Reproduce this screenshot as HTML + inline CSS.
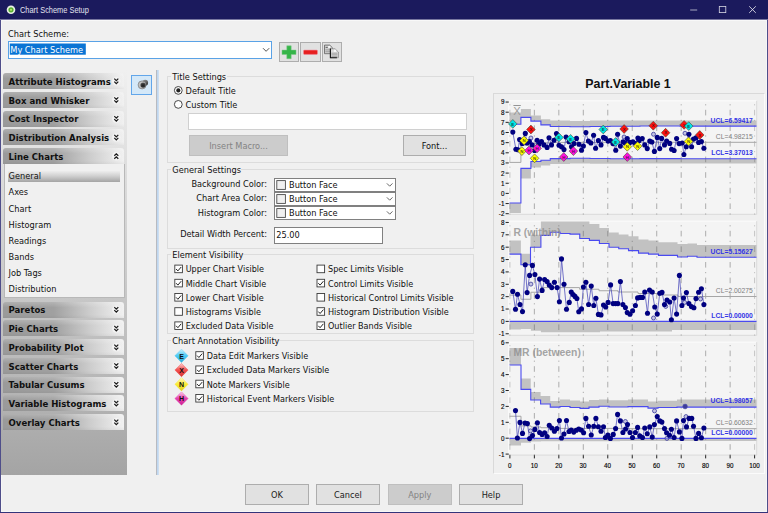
<!DOCTYPE html>
<html lang="en"><head><meta charset="utf-8"><title>Chart Scheme Setup</title>
<style>
html,body{margin:0;padding:0}
body{width:768px;height:513px;overflow:hidden;position:relative;background:#f0f0f0;font-family:"DejaVu Sans Condensed","Liberation Sans",sans-serif;}
.lib{font-family:"Liberation Sans",Arial,sans-serif;}
.t{position:absolute;white-space:nowrap;line-height:1;}
.b{position:absolute;box-sizing:border-box;}
svg{position:absolute;left:0;top:0;overflow:visible}
.hd{position:absolute;left:3px;width:121px;height:16px;border-radius:3px 3px 0 0;background:linear-gradient(180deg,rgba(255,255,255,.22) 0%,rgba(255,255,255,0) 35%,rgba(0,0,0,0) 80%,rgba(0,0,0,.04) 100%),linear-gradient(90deg,#9a9a9a 0%,#a0a0a0 42%,#cdcdcd 72%,#f1f1f1 100%);}
.btn{position:absolute;box-sizing:border-box;border:1px solid #adadad;background:#e1e1e1;}
.grp{position:absolute;box-sizing:border-box;border:1px solid #dcdcdc;}
.cb{position:absolute;box-sizing:border-box;width:9px;height:9px;border:1px solid #444;background:#fff;}
</style></head><body>

<div class="b" style="left:0px;top:0px;width:768px;height:20px;background:#1b1a5d;"></div>
<div class="b" style="left:0px;top:19px;width:768px;height:1px;background:#7877a0;"></div>
<div class="b" style="left:1px;top:20px;width:766px;height:1px;background:#f8f8f8;"></div>
<div class="b" style="left:0px;top:20px;width:1px;height:493px;background:#4f4e8a;"></div>
<div class="b" style="left:1px;top:20px;width:1px;height:491px;background:#f6f6f6;"></div>
<div class="b" style="left:767px;top:20px;width:1px;height:493px;background:#4f4e8a;"></div>
<div class="b" style="left:766px;top:20px;width:1px;height:491px;background:#f6f6f6;"></div>
<div class="b" style="left:1px;top:511px;width:766px;height:1px;background:#f7f7f7;"></div>
<div class="b" style="left:0px;top:512px;width:768px;height:1px;background:#34337a;"></div>
<div class="t lib" style="left:20.20px;top:6.00px;font-size:8.4px;color:#e4e4ee;transform:scaleX(0.885);transform-origin:0 0;">Chart Scheme Setup</div>
<div class="t " style="left:8.00px;top:30.00px;font-size:9.15px;color:#101010;">Chart Scheme:</div>
<div class="b" style="left:8px;top:41px;width:264px;height:18px;background:#fff;border:1px solid #5aa2e6;"></div>
<svg width="768" height="513"><rect x="9.8" y="43.5" width="76" height="11.2" fill="#0a74d4"/></svg>
<div class="t " style="left:10.30px;top:46.00px;font-size:9.15px;color:#ffffff;">My Chart Scheme</div>
<div class="btn" style="left:279px;top:42px;width:20px;height:20px"></div>
<div class="btn" style="left:300px;top:42px;width:21px;height:20px"></div>
<div class="btn" style="left:322px;top:42px;width:20px;height:20px"></div>
<div class="b" style="left:1px;top:70px;width:126px;height:405.4px;background:linear-gradient(180deg,#f0f0f0 0%,#e4e4e4 15%,#c8c8c8 55%,#a4a4a4 100%);"></div>
<div class="b" style="left:4px;top:164px;width:121px;height:134px;background:#f0f0f0;border:1px solid #b8b8b8;border-top:none;"></div>
<div class="b" style="left:8px;top:170.5px;width:112px;height:11px;background:linear-gradient(180deg,#ededed 0%,#d0d0d0 45%,#a4a4a4 100%);"></div>
<div class="t " style="left:8.60px;top:172.00px;font-size:9.15px;color:#101010;">General</div>
<div class="t " style="left:8.60px;top:188.00px;font-size:9.15px;color:#101010;">Axes</div>
<div class="t " style="left:8.60px;top:205.00px;font-size:9.15px;color:#101010;">Chart</div>
<div class="t " style="left:8.60px;top:221.00px;font-size:9.15px;color:#101010;">Histogram</div>
<div class="t " style="left:8.60px;top:237.00px;font-size:9.15px;color:#101010;">Readings</div>
<div class="t " style="left:8.60px;top:253.00px;font-size:9.15px;color:#101010;">Bands</div>
<div class="t " style="left:8.60px;top:269.00px;font-size:9.15px;color:#101010;">Job Tags</div>
<div class="t " style="left:8.60px;top:285.00px;font-size:9.15px;color:#101010;">Distribution</div>
<div class="hd" style="top:73px"></div>
<div class="t " style="left:8.60px;top:77.00px;font-size:9.5px;color:#101010;font-weight:bold;">Attribute Histograms</div>
<div class="hd" style="top:91.75px"></div>
<div class="t " style="left:8.60px;top:96.00px;font-size:9.5px;color:#101010;font-weight:bold;">Box and Whisker</div>
<div class="hd" style="top:110.5px"></div>
<div class="t " style="left:8.60px;top:114.00px;font-size:9.5px;color:#101010;font-weight:bold;">Cost Inspector</div>
<div class="hd" style="top:129.25px"></div>
<div class="t " style="left:8.60px;top:133.00px;font-size:9.5px;color:#101010;font-weight:bold;">Distribution Analysis</div>
<div class="hd" style="top:148px"></div>
<div class="t " style="left:8.60px;top:152.00px;font-size:9.5px;color:#101010;font-weight:bold;">Line Charts</div>
<div class="hd" style="top:301.5px"></div>
<div class="t " style="left:8.60px;top:305.00px;font-size:9.5px;color:#101010;font-weight:bold;">Paretos</div>
<div class="hd" style="top:320.25px"></div>
<div class="t " style="left:8.60px;top:324.00px;font-size:9.5px;color:#101010;font-weight:bold;">Pie Charts</div>
<div class="hd" style="top:339px"></div>
<div class="t " style="left:8.60px;top:343.00px;font-size:9.5px;color:#101010;font-weight:bold;">Probability Plot</div>
<div class="hd" style="top:357.75px"></div>
<div class="t " style="left:8.60px;top:362.00px;font-size:9.5px;color:#101010;font-weight:bold;">Scatter Charts</div>
<div class="hd" style="top:376.5px"></div>
<div class="t " style="left:8.60px;top:380.00px;font-size:9.5px;color:#101010;font-weight:bold;">Tabular Cusums</div>
<div class="hd" style="top:395.25px"></div>
<div class="t " style="left:8.60px;top:399.00px;font-size:9.5px;color:#101010;font-weight:bold;">Variable Histograms</div>
<div class="hd" style="top:414px"></div>
<div class="t " style="left:8.60px;top:418.00px;font-size:9.5px;color:#101010;font-weight:bold;">Overlay Charts</div>
<div class="b" style="left:131px;top:75px;width:21px;height:20px;background:#d4e8f8;border:1px solid #62a6ea;"></div>
<div class="b" style="left:156px;top:70px;width:1px;height:405px;background:#b8bac0;"></div>
<div class="b" style="left:157px;top:70px;width:2px;height:405px;background:linear-gradient(90deg,#bcd4ee 0%,#c4dbf2 60%,#d8e2ee 100%);"></div>
<div class="grp" style="left:167px;top:76px;width:307px;height:87px"></div>
<div class="b" style="left:171px;top:74px;width:56px;height:5px;background:#f0f0f0;"></div>
<div class="t " style="left:172.30px;top:73.00px;font-size:9.15px;color:#101010;">Title Settings</div>
<div class="grp" style="left:167px;top:169px;width:307px;height:80px"></div>
<div class="b" style="left:171px;top:167px;width:70px;height:5px;background:#f0f0f0;"></div>
<div class="t " style="left:172.30px;top:166.00px;font-size:9.15px;color:#101010;">General Settings</div>
<div class="grp" style="left:167px;top:254px;width:307px;height:80px"></div>
<div class="b" style="left:171px;top:252px;width:71px;height:5px;background:#f0f0f0;"></div>
<div class="t " style="left:172.30px;top:251.00px;font-size:9.15px;color:#101010;">Element Visibility</div>
<div class="grp" style="left:167px;top:340px;width:307px;height:72px"></div>
<div class="b" style="left:171px;top:338px;width:106px;height:5px;background:#f0f0f0;"></div>
<div class="t " style="left:172.30px;top:337.00px;font-size:9.15px;color:#101010;">Chart Annotation Visibility</div>
<div class="t " style="left:185.60px;top:87.00px;font-size:9.15px;color:#101010;">Default Title</div>
<div class="t " style="left:185.60px;top:101.00px;font-size:9.15px;color:#101010;">Custom Title</div>
<div class="b" style="left:188px;top:113px;width:279px;height:17px;background:#fff;border:1px solid #d0d0d0;"></div>
<div class="btn" style="left:189px;top:135px;width:99px;height:21px;background:#cccccc;border-color:#bfbfbf"></div>
<div class="t " style="left:138.50px;width:200px;text-align:center;top:142.00px;font-size:9.15px;color:#838383;">Insert Macro...</div>
<div class="btn" style="left:403px;top:135px;width:63px;height:21px"></div>
<div class="t " style="left:334.50px;width:200px;text-align:center;top:142.00px;font-size:9.15px;color:#101010;">Font...</div>
<div class="t " style="right:501.00px;top:180.00px;font-size:9.15px;color:#101010;">Background Color:</div>
<div class="b" style="left:274px;top:178px;width:122px;height:14px;background:#fff;border:1px solid #808080;"></div>
<div class="t " style="left:289.00px;top:181.00px;font-size:9.15px;color:#101010;">Button Face</div>
<div class="t " style="right:501.00px;top:194.00px;font-size:9.15px;color:#101010;">Chart Area Color:</div>
<div class="b" style="left:274px;top:192px;width:122px;height:14px;background:#fff;border:1px solid #808080;"></div>
<div class="t " style="left:289.00px;top:195.00px;font-size:9.15px;color:#101010;">Button Face</div>
<div class="t " style="right:501.00px;top:209.00px;font-size:9.15px;color:#101010;">Histogram Color:</div>
<div class="b" style="left:274px;top:206px;width:122px;height:14px;background:#fff;border:1px solid #808080;"></div>
<div class="t " style="left:289.00px;top:209.00px;font-size:9.15px;color:#101010;">Button Face</div>
<div class="t " style="right:501.00px;top:230.00px;font-size:9.15px;color:#101010;">Detail Width Percent:</div>
<div class="b" style="left:274px;top:227px;width:109px;height:17px;background:#fff;border:1px solid #808080;"></div>
<div class="t " style="left:276.30px;top:231.00px;font-size:9.15px;color:#101010;">25.00</div>
<div class="t " style="left:185.70px;top:265.00px;font-size:9.0px;color:#101010;">Upper Chart Visible</div>
<div class="t " style="left:185.70px;top:280.00px;font-size:9.0px;color:#101010;">Middle Chart Visible</div>
<div class="t " style="left:185.70px;top:294.00px;font-size:9.0px;color:#101010;">Lower Chart Visible</div>
<div class="t " style="left:185.70px;top:308.00px;font-size:9.0px;color:#101010;">Histograms Visible</div>
<div class="t " style="left:185.70px;top:322.00px;font-size:9.0px;color:#101010;">Excluded Data Visible</div>
<div class="t " style="left:328.00px;top:265.00px;font-size:9.0px;color:#101010;">Spec Limits Visible</div>
<div class="t " style="left:328.00px;top:280.00px;font-size:9.0px;color:#101010;">Control Limits Visible</div>
<div class="t " style="left:328.00px;top:294.00px;font-size:9.0px;color:#101010;">Historical Control Limits Visible</div>
<div class="t " style="left:328.00px;top:308.00px;font-size:9.0px;color:#101010;">Histogram Distribution Visible</div>
<div class="t " style="left:328.00px;top:322.00px;font-size:9.0px;color:#101010;">Outlier Bands Visible</div>
<div class="t " style="left:206.80px;top:352.00px;font-size:9.0px;color:#101010;">Data Edit Markers Visible</div>
<div class="t " style="left:206.80px;top:366.00px;font-size:9.0px;color:#101010;">Excluded Data Markers Visible</div>
<div class="t " style="left:206.80px;top:381.00px;font-size:9.0px;color:#101010;">Note Markers Visible</div>
<div class="t " style="left:206.80px;top:395.00px;font-size:9.0px;color:#101010;">Historical Event Markers Visible</div>
<div class="btn" style="left:245px;top:484px;width:64px;height:20.5px;"></div>
<div class="t " style="left:177.00px;width:200px;text-align:center;top:491.00px;font-size:9.15px;color:#1a1a1a;">OK</div>
<div class="btn" style="left:316px;top:484px;width:64px;height:20.5px;"></div>
<div class="t " style="left:248.00px;width:200px;text-align:center;top:491.00px;font-size:9.15px;color:#1a1a1a;">Cancel</div>
<div class="btn" style="left:388px;top:484px;width:63.5px;height:20.5px;background:#cccccc;border-color:#bfbfbf;"></div>
<div class="t " style="left:319.75px;width:200px;text-align:center;top:491.00px;font-size:9.15px;color:#838383;">Apply</div>
<div class="btn" style="left:459px;top:484px;width:64px;height:20.5px;"></div>
<div class="t " style="left:391.00px;width:200px;text-align:center;top:491.00px;font-size:9.15px;color:#1a1a1a;">Help</div>
<div class="t lib" style="left:528.00px;width:200px;text-align:center;top:78.00px;font-size:12.4px;color:#111;font-weight:bold;">Part.Variable 1</div>
<div class="b" style="left:493px;top:93px;width:272px;height:381px;border:1px solid #d9d9d9;border-right-color:#fbfbfb;border-bottom-color:#fbfbfb;background:#efefef;"></div>
<svg width="768" height="513" viewBox="0 0 768 513" font-family="Liberation Sans, Arial, sans-serif">
<rect x="508.8" y="100.8" width="247.9" height="113.2" fill="#f4f4f4"/>
<path d="M508.8 214.0 V100.8 H756.7" fill="none" stroke="#fdfdfd" stroke-width="1"/>
<path d="M508.8 214.3 H756.7 V100.8" fill="none" stroke="#dadada" stroke-width="1"/>
<path d="M509.50 124.30 L520.90 124.30 L520.90 117.40 L530.90 117.40 L530.90 121.10 L540.90 121.10 L540.90 124.90 L550.25 124.90 L550.25 126.50 L570.00 126.50 L570.00 126.80 L590.00 126.80 L590.00 126.50 L610.00 126.50 L610.00 126.20 L640.00 126.20 L640.00 126.00 L680.00 126.00 L680.00 126.10 L756.50 126.10 L756.50 120.50 L680.00 120.50 L680.00 120.50 L640.00 120.50 L640.00 120.40 L610.00 120.40 L610.00 120.60 L590.00 120.60 L590.00 120.90 L570.00 120.90 L570.00 120.50 L550.25 120.50 L550.25 119.25 L540.90 119.25 L540.90 115.50 L530.90 115.50 L530.90 109.00 L520.90 109.00 L520.90 112.40 L509.50 112.40 Z" fill="#c2c2c2"/>
<path d="M509.50 203.00 L520.90 203.00 L520.90 168.40 L530.90 168.40 L530.90 161.50 L540.90 161.50 L540.90 160.25 L550.25 160.25 L550.25 158.60 L570.00 158.60 L570.00 158.20 L590.00 158.20 L590.00 158.50 L610.00 158.50 L610.00 158.80 L640.00 158.80 L640.00 158.60 L680.00 158.60 L680.00 158.70 L756.50 158.70 L756.50 163.60 L680.00 163.60 L680.00 163.60 L640.00 163.60 L640.00 163.80 L610.00 163.80 L610.00 163.70 L590.00 163.70 L590.00 163.50 L570.00 163.50 L570.00 164.00 L550.25 164.00 L550.25 165.50 L540.90 165.50 L540.90 167.50 L530.90 167.50 L530.90 178.50 L520.90 178.50 L520.90 213.00 L509.50 213.00 Z" fill="#c2c2c2"/>
<line x1="509.90" y1="214.6" x2="509.90" y2="103.3" stroke="#666" stroke-opacity="0.4" stroke-width="0.85" stroke-dasharray="1.2 4.4 5.6 4.4"/>
<line x1="534.37" y1="214.6" x2="534.37" y2="103.3" stroke="#666" stroke-opacity="0.6" stroke-width="0.85" stroke-dasharray="1.2 4.4 5.6 4.4"/>
<line x1="558.84" y1="214.6" x2="558.84" y2="103.3" stroke="#666" stroke-opacity="0.6" stroke-width="0.85" stroke-dasharray="1.2 4.4 5.6 4.4"/>
<line x1="583.31" y1="214.6" x2="583.31" y2="103.3" stroke="#666" stroke-opacity="0.6" stroke-width="0.85" stroke-dasharray="1.2 4.4 5.6 4.4"/>
<line x1="607.78" y1="214.6" x2="607.78" y2="103.3" stroke="#666" stroke-opacity="0.6" stroke-width="0.85" stroke-dasharray="1.2 4.4 5.6 4.4"/>
<line x1="632.25" y1="214.6" x2="632.25" y2="103.3" stroke="#666" stroke-opacity="0.6" stroke-width="0.85" stroke-dasharray="1.2 4.4 5.6 4.4"/>
<line x1="656.72" y1="214.6" x2="656.72" y2="103.3" stroke="#666" stroke-opacity="0.6" stroke-width="0.85" stroke-dasharray="1.2 4.4 5.6 4.4"/>
<line x1="681.19" y1="214.6" x2="681.19" y2="103.3" stroke="#666" stroke-opacity="0.6" stroke-width="0.85" stroke-dasharray="1.2 4.4 5.6 4.4"/>
<line x1="705.66" y1="214.6" x2="705.66" y2="103.3" stroke="#666" stroke-opacity="0.6" stroke-width="0.85" stroke-dasharray="1.2 4.4 5.6 4.4"/>
<line x1="730.13" y1="214.6" x2="730.13" y2="103.3" stroke="#666" stroke-opacity="0.6" stroke-width="0.85" stroke-dasharray="1.2 4.4 5.6 4.4"/>
<line x1="754.60" y1="214.6" x2="754.60" y2="103.3" stroke="#666" stroke-opacity="0.4" stroke-width="0.85" stroke-dasharray="1.2 4.4 5.6 4.4"/>
<line x1="505.6" y1="213.70" x2="508.8" y2="213.70" stroke="#222" stroke-width="1"/>
<text transform="translate(504.4,216.10) scale(0.9,1)" font-size="7.0" text-anchor="end" fill="#000" stroke="#000" stroke-width="0.15">-2</text>
<line x1="505.6" y1="203.55" x2="508.8" y2="203.55" stroke="#222" stroke-width="1"/>
<text transform="translate(504.4,205.95) scale(0.9,1)" font-size="7.0" text-anchor="end" fill="#000" stroke="#000" stroke-width="0.15">-1</text>
<line x1="505.6" y1="193.40" x2="508.8" y2="193.40" stroke="#222" stroke-width="1"/>
<text transform="translate(504.4,195.80) scale(0.9,1)" font-size="7.0" text-anchor="end" fill="#000" stroke="#000" stroke-width="0.15">0</text>
<line x1="505.6" y1="183.25" x2="508.8" y2="183.25" stroke="#222" stroke-width="1"/>
<text transform="translate(504.4,185.65) scale(0.9,1)" font-size="7.0" text-anchor="end" fill="#000" stroke="#000" stroke-width="0.15">1</text>
<line x1="505.6" y1="173.10" x2="508.8" y2="173.10" stroke="#222" stroke-width="1"/>
<text transform="translate(504.4,175.50) scale(0.9,1)" font-size="7.0" text-anchor="end" fill="#000" stroke="#000" stroke-width="0.15">2</text>
<line x1="505.6" y1="162.95" x2="508.8" y2="162.95" stroke="#222" stroke-width="1"/>
<text transform="translate(504.4,165.35) scale(0.9,1)" font-size="7.0" text-anchor="end" fill="#000" stroke="#000" stroke-width="0.15">3</text>
<line x1="505.6" y1="152.80" x2="508.8" y2="152.80" stroke="#222" stroke-width="1"/>
<text transform="translate(504.4,155.20) scale(0.9,1)" font-size="7.0" text-anchor="end" fill="#000" stroke="#000" stroke-width="0.15">4</text>
<line x1="505.6" y1="142.65" x2="508.8" y2="142.65" stroke="#222" stroke-width="1"/>
<text transform="translate(504.4,145.05) scale(0.9,1)" font-size="7.0" text-anchor="end" fill="#000" stroke="#000" stroke-width="0.15">5</text>
<line x1="505.6" y1="132.50" x2="508.8" y2="132.50" stroke="#222" stroke-width="1"/>
<text transform="translate(504.4,134.90) scale(0.9,1)" font-size="7.0" text-anchor="end" fill="#000" stroke="#000" stroke-width="0.15">6</text>
<line x1="505.6" y1="122.35" x2="508.8" y2="122.35" stroke="#222" stroke-width="1"/>
<text transform="translate(504.4,124.75) scale(0.9,1)" font-size="7.0" text-anchor="end" fill="#000" stroke="#000" stroke-width="0.15">7</text>
<line x1="505.6" y1="112.20" x2="508.8" y2="112.20" stroke="#222" stroke-width="1"/>
<text transform="translate(504.4,114.60) scale(0.9,1)" font-size="7.0" text-anchor="end" fill="#000" stroke="#000" stroke-width="0.15">8</text>
<line x1="505.6" y1="102.05" x2="508.8" y2="102.05" stroke="#222" stroke-width="1"/>
<text transform="translate(504.4,104.45) scale(0.9,1)" font-size="7.0" text-anchor="end" fill="#000" stroke="#000" stroke-width="0.15">9</text>
<polyline points="509.50,162.40 520.90,162.40 520.90,145.00 530.90,145.00 530.90,143.50 540.90,143.50 540.90,142.80 550.25,142.80 550.25,142.40 600.00,142.40 600.00,142.30 756.50,142.30" fill="none" stroke="#a6a6a6" stroke-width="1"/>
<polyline points="509.50,124.30 520.90,124.30 520.90,117.40 530.90,117.40 530.90,121.10 540.90,121.10 540.90,124.90 550.25,124.90 550.25,126.50 570.00,126.50 570.00,126.80 590.00,126.80 590.00,126.50 610.00,126.50 610.00,126.20 640.00,126.20 640.00,126.00 680.00,126.00 680.00,126.10 756.50,126.10" fill="none" stroke="#4a4af0" stroke-width="1.1"/>
<polyline points="509.50,203.00 520.90,203.00 520.90,168.40 530.90,168.40 530.90,161.50 540.90,161.50 540.90,160.25 550.25,160.25 550.25,158.60 570.00,158.60 570.00,158.20 590.00,158.20 590.00,158.50 610.00,158.50 610.00,158.80 640.00,158.80 640.00,158.60 680.00,158.60 680.00,158.70 756.50,158.70" fill="none" stroke="#4a4af0" stroke-width="1.1"/>
<text x="513.3" y="114.9" font-size="11.2" fill="#969696" fill-opacity="0.95">X</text>
<line x1="513.4" y1="105.5" x2="520.8" y2="105.5" stroke="#8a8a8a" stroke-width="0.9"/>
<polyline points="512.80,132.10 515.90,149.30 518.00,149.80 519.60,139.60 522.20,143.50 525.30,133.40 527.10,143.00 529.40,141.50 532.10,144.90 534.60,150.50 537.10,140.30 539.00,144.30 541.50,141.50 544.00,144.90 547.10,147.40 549.00,137.80 551.50,144.90 554.00,140.30 556.50,133.60 559.00,145.30 561.50,146.80 564.00,149.60 566.10,137.00 569.00,141.80 571.50,146.80 574.00,143.60 576.50,138.40 579.00,144.30 581.50,150.30 583.40,146.10 585.90,132.60 588.40,141.10 590.90,143.00 593.60,135.30 595.60,148.30 598.40,140.50 601.00,144.90 603.50,137.40 605.40,138.40 608.10,141.10 610.40,140.50 612.90,143.60 615.75,150.25 617.60,134.25 620.40,146.10 623.10,141.75 625.20,143.00 627.25,138.60 629.75,142.40 632.90,141.75 635.40,143.50 637.90,138.00 639.10,140.50 642.25,138.60 644.75,144.90 647.25,148.60 649.75,141.10 651.90,142.00 654.40,151.40 657.25,137.40 659.75,148.60 661.60,138.40 664.50,144.90 666.60,141.10 669.75,143.40 671.60,149.25 674.10,150.50 676.60,138.60 679.10,143.60 682.25,143.00 683.90,154.50 686.25,146.75 688.90,134.25 691.60,146.75 693.50,139.10 696.00,137.90 698.60,142.50 701.40,141.60 703.90,148.25" fill="none" stroke="#3c3cb4" stroke-width="0.7"/>
<circle cx="530.9" cy="138" r="2.0" fill="#9c9cd4" fill-opacity="0.55" stroke="#3a3a9c" stroke-width="0.8"/>
<circle cx="624.1" cy="137" r="2.0" fill="#9c9cd4" fill-opacity="0.55" stroke="#3a3a9c" stroke-width="0.8"/>
<circle cx="653.5" cy="134.25" r="2.0" fill="#9c9cd4" fill-opacity="0.55" stroke="#3a3a9c" stroke-width="0.8"/>
<circle cx="685" cy="133.25" r="2.0" fill="#9c9cd4" fill-opacity="0.55" stroke="#3a3a9c" stroke-width="0.8"/>
<circle cx="512.8" cy="132.1" r="2.55" fill="#000080"/>
<circle cx="515.9" cy="149.3" r="2.55" fill="#000080"/>
<circle cx="518.0" cy="149.8" r="2.55" fill="#000080"/>
<circle cx="519.6" cy="139.6" r="2.55" fill="#000080"/>
<circle cx="522.2" cy="143.5" r="2.55" fill="#000080"/>
<circle cx="525.3" cy="133.4" r="2.55" fill="#000080"/>
<circle cx="527.1" cy="143" r="2.55" fill="#000080"/>
<circle cx="529.4" cy="141.5" r="2.55" fill="#000080"/>
<circle cx="532.1" cy="144.9" r="2.55" fill="#000080"/>
<circle cx="534.6" cy="150.5" r="2.55" fill="#000080"/>
<circle cx="537.1" cy="140.3" r="2.55" fill="#000080"/>
<circle cx="539" cy="144.3" r="2.55" fill="#000080"/>
<circle cx="541.5" cy="141.5" r="2.55" fill="#000080"/>
<circle cx="544" cy="144.9" r="2.55" fill="#000080"/>
<circle cx="547.1" cy="147.4" r="2.55" fill="#000080"/>
<circle cx="549" cy="137.8" r="2.55" fill="#000080"/>
<circle cx="551.5" cy="144.9" r="2.55" fill="#000080"/>
<circle cx="554" cy="140.3" r="2.55" fill="#000080"/>
<circle cx="556.5" cy="133.6" r="2.55" fill="#000080"/>
<circle cx="559" cy="145.3" r="2.55" fill="#000080"/>
<circle cx="561.5" cy="146.8" r="2.55" fill="#000080"/>
<circle cx="564" cy="149.6" r="2.55" fill="#000080"/>
<circle cx="566.1" cy="137" r="2.55" fill="#000080"/>
<circle cx="569" cy="141.8" r="2.55" fill="#000080"/>
<circle cx="571.5" cy="146.8" r="2.55" fill="#000080"/>
<circle cx="574" cy="143.6" r="2.55" fill="#000080"/>
<circle cx="576.5" cy="138.4" r="2.55" fill="#000080"/>
<circle cx="579" cy="144.3" r="2.55" fill="#000080"/>
<circle cx="581.5" cy="150.3" r="2.55" fill="#000080"/>
<circle cx="583.4" cy="146.1" r="2.55" fill="#000080"/>
<circle cx="585.9" cy="132.6" r="2.55" fill="#000080"/>
<circle cx="588.4" cy="141.1" r="2.55" fill="#000080"/>
<circle cx="590.9" cy="143" r="2.55" fill="#000080"/>
<circle cx="593.6" cy="135.3" r="2.55" fill="#000080"/>
<circle cx="595.6" cy="148.3" r="2.55" fill="#000080"/>
<circle cx="598.4" cy="140.5" r="2.55" fill="#000080"/>
<circle cx="601" cy="144.9" r="2.55" fill="#000080"/>
<circle cx="603.5" cy="137.4" r="2.55" fill="#000080"/>
<circle cx="605.4" cy="138.4" r="2.55" fill="#000080"/>
<circle cx="608.1" cy="141.1" r="2.55" fill="#000080"/>
<circle cx="610.4" cy="140.5" r="2.55" fill="#000080"/>
<circle cx="612.9" cy="143.6" r="2.55" fill="#000080"/>
<circle cx="615.75" cy="150.25" r="2.55" fill="#000080"/>
<circle cx="617.6" cy="134.25" r="2.55" fill="#000080"/>
<circle cx="620.4" cy="146.1" r="2.55" fill="#000080"/>
<circle cx="623.1" cy="141.75" r="2.55" fill="#000080"/>
<circle cx="625.2" cy="143.0" r="2.55" fill="#000080"/>
<circle cx="627.25" cy="138.6" r="2.55" fill="#000080"/>
<circle cx="629.75" cy="142.4" r="2.55" fill="#000080"/>
<circle cx="632.9" cy="141.75" r="2.55" fill="#000080"/>
<circle cx="635.4" cy="143.5" r="2.55" fill="#000080"/>
<circle cx="637.9" cy="138" r="2.55" fill="#000080"/>
<circle cx="639.1" cy="140.5" r="2.55" fill="#000080"/>
<circle cx="642.25" cy="138.6" r="2.55" fill="#000080"/>
<circle cx="644.75" cy="144.9" r="2.55" fill="#000080"/>
<circle cx="647.25" cy="148.6" r="2.55" fill="#000080"/>
<circle cx="649.75" cy="141.1" r="2.55" fill="#000080"/>
<circle cx="651.9" cy="142" r="2.55" fill="#000080"/>
<circle cx="654.4" cy="151.4" r="2.55" fill="#000080"/>
<circle cx="657.25" cy="137.4" r="2.55" fill="#000080"/>
<circle cx="659.75" cy="148.6" r="2.55" fill="#000080"/>
<circle cx="661.6" cy="138.4" r="2.55" fill="#000080"/>
<circle cx="664.5" cy="144.9" r="2.55" fill="#000080"/>
<circle cx="666.6" cy="141.1" r="2.55" fill="#000080"/>
<circle cx="669.75" cy="143.4" r="2.55" fill="#000080"/>
<circle cx="671.6" cy="149.25" r="2.55" fill="#000080"/>
<circle cx="674.1" cy="150.5" r="2.55" fill="#000080"/>
<circle cx="676.6" cy="138.6" r="2.55" fill="#000080"/>
<circle cx="679.1" cy="143.6" r="2.55" fill="#000080"/>
<circle cx="682.25" cy="143" r="2.55" fill="#000080"/>
<circle cx="683.9" cy="154.5" r="2.55" fill="#000080"/>
<circle cx="686.25" cy="146.75" r="2.55" fill="#000080"/>
<circle cx="688.9" cy="134.25" r="2.55" fill="#000080"/>
<circle cx="691.6" cy="146.75" r="2.55" fill="#000080"/>
<circle cx="693.5" cy="139.1" r="2.55" fill="#000080"/>
<circle cx="696" cy="137.9" r="2.55" fill="#000080"/>
<circle cx="698.6" cy="142.5" r="2.55" fill="#000080"/>
<circle cx="701.4" cy="141.6" r="2.55" fill="#000080"/>
<circle cx="703.9" cy="148.25" r="2.55" fill="#000080"/>
<text x="752.8" y="122.50" font-size="6.75" text-anchor="end" fill="#3434e6" font-weight="bold">UCL=6.59417</text>
<text x="752.8" y="139.10" font-size="6.75" text-anchor="end" fill="#7e7e7e">CL=4.98215</text>
<text x="752.8" y="155.40" font-size="6.75" text-anchor="end" fill="#3434e6" font-weight="bold">LCL=3.37013</text>
<rect x="508.8" y="221.2" width="247.9" height="113.80000000000001" fill="#f4f4f4"/>
<path d="M508.8 335.0 V221.2 H756.7" fill="none" stroke="#fdfdfd" stroke-width="1"/>
<path d="M508.8 335.3 H756.7 V221.2" fill="none" stroke="#dadada" stroke-width="1"/>
<path d="M509.50 254.10 L520.90 254.10 L520.90 264.75 L530.50 264.75 L530.50 247.25 L540.90 247.25 L540.90 235.40 L550.25 235.40 L550.25 232.25 L560.20 232.25 L560.20 233.50 L570.00 233.50 L570.00 234.10 L579.75 234.10 L579.75 238.50 L589.40 238.50 L589.40 240.40 L599.40 240.40 L599.40 243.50 L609.00 243.50 L609.00 247.25 L618.75 247.25 L618.75 248.75 L628.50 248.75 L628.50 250.60 L638.50 250.60 L638.50 253.10 L648.50 253.10 L648.50 254.10 L658.50 254.10 L658.50 255.40 L677.50 255.40 L677.50 257.00 L687.50 257.00 L687.50 256.30 L697.00 256.30 L697.00 257.25 L756.50 257.25 L756.50 245.00 L697.00 245.00 L697.00 243.50 L687.50 243.50 L687.50 244.10 L677.50 244.10 L677.50 242.25 L658.50 242.25 L658.50 240.60 L648.50 240.60 L648.50 239.50 L638.50 239.50 L638.50 236.25 L628.50 236.25 L628.50 234.40 L618.75 234.40 L618.75 232.50 L609.00 232.50 L609.00 228.10 L599.40 228.10 L599.40 224.10 L589.40 224.10 L589.40 221.60 L579.75 221.60 L579.75 221.60 L570.00 221.60 L570.00 221.60 L560.20 221.60 L560.20 221.60 L550.25 221.60 L550.25 221.60 L540.90 221.60 L540.90 234.75 L530.50 234.75 L530.50 253.80 L520.90 253.80 L520.90 240.60 L509.50 240.60 Z" fill="#c2c2c2"/>
<path d="M509.50 321.40 L756.50 321.40 L756.50 330.00 L672.00 330.00 L672.00 331.50 L600.00 331.50 L600.00 332.25 L540.90 332.25 L540.90 330.75 L530.90 330.75 L530.90 328.90 L520.90 328.90 L520.90 329.50 L509.50 329.50 Z" fill="#c2c2c2"/>
<line x1="509.90" y1="335.6" x2="509.90" y2="223.7" stroke="#666" stroke-opacity="0.4" stroke-width="0.85" stroke-dasharray="1.2 4.4 5.6 4.4"/>
<line x1="534.37" y1="335.6" x2="534.37" y2="223.7" stroke="#666" stroke-opacity="0.6" stroke-width="0.85" stroke-dasharray="1.2 4.4 5.6 4.4"/>
<line x1="558.84" y1="335.6" x2="558.84" y2="223.7" stroke="#666" stroke-opacity="0.6" stroke-width="0.85" stroke-dasharray="1.2 4.4 5.6 4.4"/>
<line x1="583.31" y1="335.6" x2="583.31" y2="223.7" stroke="#666" stroke-opacity="0.6" stroke-width="0.85" stroke-dasharray="1.2 4.4 5.6 4.4"/>
<line x1="607.78" y1="335.6" x2="607.78" y2="223.7" stroke="#666" stroke-opacity="0.6" stroke-width="0.85" stroke-dasharray="1.2 4.4 5.6 4.4"/>
<line x1="632.25" y1="335.6" x2="632.25" y2="223.7" stroke="#666" stroke-opacity="0.6" stroke-width="0.85" stroke-dasharray="1.2 4.4 5.6 4.4"/>
<line x1="656.72" y1="335.6" x2="656.72" y2="223.7" stroke="#666" stroke-opacity="0.6" stroke-width="0.85" stroke-dasharray="1.2 4.4 5.6 4.4"/>
<line x1="681.19" y1="335.6" x2="681.19" y2="223.7" stroke="#666" stroke-opacity="0.6" stroke-width="0.85" stroke-dasharray="1.2 4.4 5.6 4.4"/>
<line x1="705.66" y1="335.6" x2="705.66" y2="223.7" stroke="#666" stroke-opacity="0.6" stroke-width="0.85" stroke-dasharray="1.2 4.4 5.6 4.4"/>
<line x1="730.13" y1="335.6" x2="730.13" y2="223.7" stroke="#666" stroke-opacity="0.6" stroke-width="0.85" stroke-dasharray="1.2 4.4 5.6 4.4"/>
<line x1="754.60" y1="335.6" x2="754.60" y2="223.7" stroke="#666" stroke-opacity="0.4" stroke-width="0.85" stroke-dasharray="1.2 4.4 5.6 4.4"/>
<line x1="505.6" y1="333.77" x2="508.8" y2="333.77" stroke="#222" stroke-width="1"/>
<text transform="translate(504.4,336.17) scale(0.9,1)" font-size="7.0" text-anchor="end" fill="#000" stroke="#000" stroke-width="0.15">-1</text>
<line x1="505.6" y1="321.40" x2="508.8" y2="321.40" stroke="#222" stroke-width="1"/>
<text transform="translate(504.4,323.80) scale(0.9,1)" font-size="7.0" text-anchor="end" fill="#000" stroke="#000" stroke-width="0.15">0</text>
<line x1="505.6" y1="309.03" x2="508.8" y2="309.03" stroke="#222" stroke-width="1"/>
<text transform="translate(504.4,311.43) scale(0.9,1)" font-size="7.0" text-anchor="end" fill="#000" stroke="#000" stroke-width="0.15">1</text>
<line x1="505.6" y1="296.66" x2="508.8" y2="296.66" stroke="#222" stroke-width="1"/>
<text transform="translate(504.4,299.06) scale(0.9,1)" font-size="7.0" text-anchor="end" fill="#000" stroke="#000" stroke-width="0.15">2</text>
<line x1="505.6" y1="284.29" x2="508.8" y2="284.29" stroke="#222" stroke-width="1"/>
<text transform="translate(504.4,286.69) scale(0.9,1)" font-size="7.0" text-anchor="end" fill="#000" stroke="#000" stroke-width="0.15">3</text>
<line x1="505.6" y1="271.92" x2="508.8" y2="271.92" stroke="#222" stroke-width="1"/>
<text transform="translate(504.4,274.32) scale(0.9,1)" font-size="7.0" text-anchor="end" fill="#000" stroke="#000" stroke-width="0.15">4</text>
<line x1="505.6" y1="259.55" x2="508.8" y2="259.55" stroke="#222" stroke-width="1"/>
<text transform="translate(504.4,261.95) scale(0.9,1)" font-size="7.0" text-anchor="end" fill="#000" stroke="#000" stroke-width="0.15">5</text>
<line x1="505.6" y1="247.18" x2="508.8" y2="247.18" stroke="#222" stroke-width="1"/>
<text transform="translate(504.4,249.58) scale(0.9,1)" font-size="7.0" text-anchor="end" fill="#000" stroke="#000" stroke-width="0.15">6</text>
<line x1="505.6" y1="234.81" x2="508.8" y2="234.81" stroke="#222" stroke-width="1"/>
<text transform="translate(504.4,237.21) scale(0.9,1)" font-size="7.0" text-anchor="end" fill="#000" stroke="#000" stroke-width="0.15">7</text>
<line x1="505.6" y1="222.44" x2="508.8" y2="222.44" stroke="#222" stroke-width="1"/>
<text transform="translate(504.4,224.84) scale(0.9,1)" font-size="7.0" text-anchor="end" fill="#000" stroke="#000" stroke-width="0.15">8</text>
<polyline points="509.50,295.10 520.90,295.10 520.90,299.25 530.90,299.25 530.90,292.25 540.90,292.25 540.90,287.60 579.60,287.60 579.60,289.25 599.00,289.25 599.00,290.75 618.00,290.75 618.00,292.00 638.00,292.00 638.00,293.50 658.00,293.50 658.00,295.00 678.00,295.00 678.00,296.50 756.50,296.50" fill="none" stroke="#a6a6a6" stroke-width="1"/>
<polyline points="509.50,254.10 520.90,254.10 520.90,264.75 530.50,264.75 530.50,247.25 540.90,247.25 540.90,235.40 550.25,235.40 550.25,232.25 560.20,232.25 560.20,233.50 570.00,233.50 570.00,234.10 579.75,234.10 579.75,238.50 589.40,238.50 589.40,240.40 599.40,240.40 599.40,243.50 609.00,243.50 609.00,247.25 618.75,247.25 618.75,248.75 628.50,248.75 628.50,250.60 638.50,250.60 638.50,253.10 648.50,253.10 648.50,254.10 658.50,254.10 658.50,255.40 677.50,255.40 677.50,257.00 687.50,257.00 687.50,256.30 697.00,256.30 697.00,257.25 756.50,257.25" fill="none" stroke="#4a4af0" stroke-width="1.1"/>
<polyline points="509.50,321.40 756.50,321.40" fill="none" stroke="#4a4af0" stroke-width="1.1"/>
<text x="513.4" y="235.7" font-size="10.4" font-weight="bold" fill="#8e8e8e" fill-opacity="0.8">R (within)</text>
<polyline points="512.75,291.40 515.50,309.25 517.50,294.25 520.00,304.50 522.50,311.60 525.25,264.75 527.10,292.60 529.60,275.40 532.40,265.40 534.90,274.50 537.40,296.60 539.60,279.10 542.10,290.40 544.60,279.50 547.10,281.60 549.25,285.10 551.75,287.60 554.40,282.25 557.10,287.60 559.40,301.75 561.50,258.90 564.00,284.25 566.50,309.25 569.25,302.40 571.25,292.00 573.10,294.50 575.00,296.40 576.90,298.50 578.75,311.75 581.50,308.90 583.40,287.00 585.90,282.25 588.60,304.50 591.25,286.10 593.75,305.50 595.90,298.25 598.40,314.40 601.00,314.90 603.50,305.10 605.75,307.00 608.10,302.40 610.60,284.90 613.10,303.60 615.60,303.60 617.90,303.60 620.40,281.60 622.90,304.50 625.40,307.60 627.25,312.60 630.00,314.25 632.60,310.75 635.40,305.50 637.60,297.90 640.10,297.40 642.50,297.40 644.75,292.00 647.50,313.25 649.50,290.10 652.25,292.00 654.75,307.00 657.25,314.10 659.75,293.25 662.00,292.40 664.50,304.50 667.00,300.10 669.75,302.00 671.40,319.75 674.10,298.00 676.60,314.10 679.40,275.40 681.90,305.50 683.50,298.00 686.40,292.60 688.90,303.50 691.40,306.60 693.90,307.75 696.00,298.60 698.60,292.30 701.40,288.70 703.90,304.60" fill="none" stroke="#3c3cb4" stroke-width="0.7"/>
<circle cx="530.9" cy="284.1" r="2.0" fill="#9c9cd4" fill-opacity="0.55" stroke="#3a3a9c" stroke-width="0.8"/>
<circle cx="653.5" cy="318" r="2.0" fill="#9c9cd4" fill-opacity="0.55" stroke="#3a3a9c" stroke-width="0.8"/>
<circle cx="665.75" cy="306.4" r="2.0" fill="#9c9cd4" fill-opacity="0.55" stroke="#3a3a9c" stroke-width="0.8"/>
<circle cx="684.6" cy="302.4" r="2.0" fill="#9c9cd4" fill-opacity="0.55" stroke="#3a3a9c" stroke-width="0.8"/>
<circle cx="700.5" cy="299" r="2.0" fill="#9c9cd4" fill-opacity="0.55" stroke="#3a3a9c" stroke-width="0.8"/>
<circle cx="512.75" cy="291.4" r="2.55" fill="#000080"/>
<circle cx="515.5" cy="309.25" r="2.55" fill="#000080"/>
<circle cx="517.5" cy="294.25" r="2.55" fill="#000080"/>
<circle cx="520" cy="304.5" r="2.55" fill="#000080"/>
<circle cx="522.5" cy="311.6" r="2.55" fill="#000080"/>
<circle cx="525.25" cy="264.75" r="2.55" fill="#000080"/>
<circle cx="527.1" cy="292.6" r="2.55" fill="#000080"/>
<circle cx="529.6" cy="275.4" r="2.55" fill="#000080"/>
<circle cx="532.4" cy="265.4" r="2.55" fill="#000080"/>
<circle cx="534.9" cy="274.5" r="2.55" fill="#000080"/>
<circle cx="537.4" cy="296.6" r="2.55" fill="#000080"/>
<circle cx="539.6" cy="279.1" r="2.55" fill="#000080"/>
<circle cx="542.1" cy="290.4" r="2.55" fill="#000080"/>
<circle cx="544.6" cy="279.5" r="2.55" fill="#000080"/>
<circle cx="547.1" cy="281.6" r="2.55" fill="#000080"/>
<circle cx="549.25" cy="285.1" r="2.55" fill="#000080"/>
<circle cx="551.75" cy="287.6" r="2.55" fill="#000080"/>
<circle cx="554.4" cy="282.25" r="2.55" fill="#000080"/>
<circle cx="557.1" cy="287.6" r="2.55" fill="#000080"/>
<circle cx="559.4" cy="301.75" r="2.55" fill="#000080"/>
<circle cx="561.5" cy="258.9" r="2.55" fill="#000080"/>
<circle cx="564" cy="284.25" r="2.55" fill="#000080"/>
<circle cx="566.5" cy="309.25" r="2.55" fill="#000080"/>
<circle cx="569.25" cy="302.4" r="2.55" fill="#000080"/>
<circle cx="571.25" cy="292" r="2.55" fill="#000080"/>
<circle cx="573.1" cy="294.5" r="2.55" fill="#000080"/>
<circle cx="575" cy="296.4" r="2.55" fill="#000080"/>
<circle cx="576.9" cy="298.5" r="2.55" fill="#000080"/>
<circle cx="578.75" cy="311.75" r="2.55" fill="#000080"/>
<circle cx="581.5" cy="308.9" r="2.55" fill="#000080"/>
<circle cx="583.4" cy="287" r="2.55" fill="#000080"/>
<circle cx="585.9" cy="282.25" r="2.55" fill="#000080"/>
<circle cx="588.6" cy="304.5" r="2.55" fill="#000080"/>
<circle cx="591.25" cy="286.1" r="2.55" fill="#000080"/>
<circle cx="593.75" cy="305.5" r="2.55" fill="#000080"/>
<circle cx="595.9" cy="298.25" r="2.55" fill="#000080"/>
<circle cx="598.4" cy="314.4" r="2.55" fill="#000080"/>
<circle cx="601" cy="314.9" r="2.55" fill="#000080"/>
<circle cx="603.5" cy="305.1" r="2.55" fill="#000080"/>
<circle cx="605.75" cy="307" r="2.55" fill="#000080"/>
<circle cx="608.1" cy="302.4" r="2.55" fill="#000080"/>
<circle cx="610.6" cy="284.9" r="2.55" fill="#000080"/>
<circle cx="613.1" cy="303.6" r="2.55" fill="#000080"/>
<circle cx="615.6" cy="303.6" r="2.55" fill="#000080"/>
<circle cx="617.9" cy="303.6" r="2.55" fill="#000080"/>
<circle cx="620.4" cy="281.6" r="2.55" fill="#000080"/>
<circle cx="622.9" cy="304.5" r="2.55" fill="#000080"/>
<circle cx="625.4" cy="307.6" r="2.55" fill="#000080"/>
<circle cx="627.25" cy="312.6" r="2.55" fill="#000080"/>
<circle cx="630" cy="314.25" r="2.55" fill="#000080"/>
<circle cx="632.6" cy="310.75" r="2.55" fill="#000080"/>
<circle cx="635.4" cy="305.5" r="2.55" fill="#000080"/>
<circle cx="637.6" cy="297.9" r="2.55" fill="#000080"/>
<circle cx="640.1" cy="297.4" r="2.55" fill="#000080"/>
<circle cx="642.5" cy="297.4" r="2.55" fill="#000080"/>
<circle cx="644.75" cy="292" r="2.55" fill="#000080"/>
<circle cx="647.5" cy="313.25" r="2.55" fill="#000080"/>
<circle cx="649.5" cy="290.1" r="2.55" fill="#000080"/>
<circle cx="652.25" cy="292" r="2.55" fill="#000080"/>
<circle cx="654.75" cy="307" r="2.55" fill="#000080"/>
<circle cx="657.25" cy="314.1" r="2.55" fill="#000080"/>
<circle cx="659.75" cy="293.25" r="2.55" fill="#000080"/>
<circle cx="662" cy="292.4" r="2.55" fill="#000080"/>
<circle cx="664.5" cy="304.5" r="2.55" fill="#000080"/>
<circle cx="667" cy="300.1" r="2.55" fill="#000080"/>
<circle cx="669.75" cy="302" r="2.55" fill="#000080"/>
<circle cx="671.4" cy="319.75" r="2.55" fill="#000080"/>
<circle cx="674.1" cy="298" r="2.55" fill="#000080"/>
<circle cx="676.6" cy="314.1" r="2.55" fill="#000080"/>
<circle cx="679.4" cy="275.4" r="2.55" fill="#000080"/>
<circle cx="681.9" cy="305.5" r="2.55" fill="#000080"/>
<circle cx="683.5" cy="298" r="2.55" fill="#000080"/>
<circle cx="686.4" cy="292.6" r="2.55" fill="#000080"/>
<circle cx="688.9" cy="303.5" r="2.55" fill="#000080"/>
<circle cx="691.4" cy="306.6" r="2.55" fill="#000080"/>
<circle cx="693.9" cy="307.75" r="2.55" fill="#000080"/>
<circle cx="696" cy="298.6" r="2.55" fill="#000080"/>
<circle cx="698.6" cy="292.3" r="2.55" fill="#000080"/>
<circle cx="701.4" cy="288.7" r="2.55" fill="#000080"/>
<circle cx="703.9" cy="304.6" r="2.55" fill="#000080"/>
<text x="752.8" y="254.00" font-size="6.75" text-anchor="end" fill="#3434e6" font-weight="bold">UCL=5.15627</text>
<text x="752.8" y="293.10" font-size="6.75" text-anchor="end" fill="#7e7e7e">CL=2.00275</text>
<text x="752.8" y="318.00" font-size="6.75" text-anchor="end" fill="#3434e6" font-weight="bold">LCL=0.00000</text>
<rect x="508.8" y="342.2" width="247.9" height="112.60000000000002" fill="#f4f4f4"/>
<path d="M508.8 454.8 V342.2 H756.7" fill="none" stroke="#fdfdfd" stroke-width="1"/>
<path d="M508.8 455.1 H756.7 V342.2" fill="none" stroke="#dadada" stroke-width="1"/>
<path d="M509.50 365.00 L521.00 365.00 L521.00 389.40 L530.75 389.40 L530.75 400.00 L540.60 400.00 L540.60 404.00 L550.25 404.00 L550.25 407.10 L560.00 407.10 L560.00 406.50 L570.00 406.50 L570.00 407.50 L580.00 407.50 L580.00 408.40 L589.00 408.40 L589.00 407.10 L599.00 407.10 L599.00 406.25 L609.00 406.25 L609.00 407.00 L628.00 407.00 L628.00 406.60 L648.00 406.60 L648.00 408.10 L658.00 408.10 L658.00 407.50 L677.00 407.50 L677.00 407.10 L756.50 407.10 L756.50 399.60 L677.00 399.60 L677.00 400.80 L658.00 400.80 L658.00 401.50 L648.00 401.50 L648.00 399.40 L628.00 399.40 L628.00 400.20 L609.00 400.20 L609.00 399.60 L599.00 399.60 L599.00 400.00 L589.00 400.00 L589.00 401.50 L580.00 401.50 L580.00 400.50 L570.00 400.50 L570.00 399.40 L560.00 399.40 L560.00 400.90 L550.25 400.90 L550.25 396.10 L540.60 396.10 L540.60 392.10 L530.75 392.10 L530.75 378.50 L521.00 378.50 L521.00 348.10 L509.50 348.10 Z" fill="#c2c2c2"/>
<path d="M509.50 438.40 L756.50 438.40 L756.50 441.00 L620.00 441.00 L620.00 441.25 L541.00 441.25 L541.00 441.50 L531.00 441.50 L531.00 442.75 L521.00 442.75 L521.00 445.50 L509.50 445.50 Z" fill="#c2c2c2"/>
<line x1="509.90" y1="455.40000000000003" x2="509.90" y2="344.7" stroke="#666" stroke-opacity="0.4" stroke-width="0.85" stroke-dasharray="1.2 4.4 5.6 4.4"/>
<line x1="534.37" y1="455.40000000000003" x2="534.37" y2="344.7" stroke="#666" stroke-opacity="0.6" stroke-width="0.85" stroke-dasharray="1.2 4.4 5.6 4.4"/>
<line x1="558.84" y1="455.40000000000003" x2="558.84" y2="344.7" stroke="#666" stroke-opacity="0.6" stroke-width="0.85" stroke-dasharray="1.2 4.4 5.6 4.4"/>
<line x1="583.31" y1="455.40000000000003" x2="583.31" y2="344.7" stroke="#666" stroke-opacity="0.6" stroke-width="0.85" stroke-dasharray="1.2 4.4 5.6 4.4"/>
<line x1="607.78" y1="455.40000000000003" x2="607.78" y2="344.7" stroke="#666" stroke-opacity="0.6" stroke-width="0.85" stroke-dasharray="1.2 4.4 5.6 4.4"/>
<line x1="632.25" y1="455.40000000000003" x2="632.25" y2="344.7" stroke="#666" stroke-opacity="0.6" stroke-width="0.85" stroke-dasharray="1.2 4.4 5.6 4.4"/>
<line x1="656.72" y1="455.40000000000003" x2="656.72" y2="344.7" stroke="#666" stroke-opacity="0.6" stroke-width="0.85" stroke-dasharray="1.2 4.4 5.6 4.4"/>
<line x1="681.19" y1="455.40000000000003" x2="681.19" y2="344.7" stroke="#666" stroke-opacity="0.6" stroke-width="0.85" stroke-dasharray="1.2 4.4 5.6 4.4"/>
<line x1="705.66" y1="455.40000000000003" x2="705.66" y2="344.7" stroke="#666" stroke-opacity="0.6" stroke-width="0.85" stroke-dasharray="1.2 4.4 5.6 4.4"/>
<line x1="730.13" y1="455.40000000000003" x2="730.13" y2="344.7" stroke="#666" stroke-opacity="0.6" stroke-width="0.85" stroke-dasharray="1.2 4.4 5.6 4.4"/>
<line x1="754.60" y1="455.40000000000003" x2="754.60" y2="344.7" stroke="#666" stroke-opacity="0.4" stroke-width="0.85" stroke-dasharray="1.2 4.4 5.6 4.4"/>
<line x1="505.6" y1="454.10" x2="508.8" y2="454.10" stroke="#222" stroke-width="1"/>
<text transform="translate(504.4,456.50) scale(0.9,1)" font-size="7.0" text-anchor="end" fill="#000" stroke="#000" stroke-width="0.15">-1</text>
<line x1="505.6" y1="438.20" x2="508.8" y2="438.20" stroke="#222" stroke-width="1"/>
<text transform="translate(504.4,440.60) scale(0.9,1)" font-size="7.0" text-anchor="end" fill="#000" stroke="#000" stroke-width="0.15">0</text>
<line x1="505.6" y1="422.30" x2="508.8" y2="422.30" stroke="#222" stroke-width="1"/>
<text transform="translate(504.4,424.70) scale(0.9,1)" font-size="7.0" text-anchor="end" fill="#000" stroke="#000" stroke-width="0.15">1</text>
<line x1="505.6" y1="406.40" x2="508.8" y2="406.40" stroke="#222" stroke-width="1"/>
<text transform="translate(504.4,408.80) scale(0.9,1)" font-size="7.0" text-anchor="end" fill="#000" stroke="#000" stroke-width="0.15">2</text>
<line x1="505.6" y1="390.50" x2="508.8" y2="390.50" stroke="#222" stroke-width="1"/>
<text transform="translate(504.4,392.90) scale(0.9,1)" font-size="7.0" text-anchor="end" fill="#000" stroke="#000" stroke-width="0.15">3</text>
<line x1="505.6" y1="374.60" x2="508.8" y2="374.60" stroke="#222" stroke-width="1"/>
<text transform="translate(504.4,377.00) scale(0.9,1)" font-size="7.0" text-anchor="end" fill="#000" stroke="#000" stroke-width="0.15">4</text>
<line x1="505.6" y1="358.70" x2="508.8" y2="358.70" stroke="#222" stroke-width="1"/>
<text transform="translate(504.4,361.10) scale(0.9,1)" font-size="7.0" text-anchor="end" fill="#000" stroke="#000" stroke-width="0.15">5</text>
<line x1="505.6" y1="342.80" x2="508.8" y2="342.80" stroke="#222" stroke-width="1"/>
<text transform="translate(504.4,345.20) scale(0.9,1)" font-size="7.0" text-anchor="end" fill="#000" stroke="#000" stroke-width="0.15">6</text>
<polyline points="509.50,416.25 521.00,416.25 521.00,425.90 531.00,425.90 531.00,427.00 541.00,427.00 541.00,427.75 560.00,427.75 560.00,428.40 620.00,428.40 620.00,428.70 756.50,428.70" fill="none" stroke="#a6a6a6" stroke-width="1"/>
<polyline points="509.50,365.00 521.00,365.00 521.00,389.40 530.75,389.40 530.75,400.00 540.60,400.00 540.60,404.00 550.25,404.00 550.25,407.10 560.00,407.10 560.00,406.50 570.00,406.50 570.00,407.50 580.00,407.50 580.00,408.40 589.00,408.40 589.00,407.10 599.00,407.10 599.00,406.25 609.00,406.25 609.00,407.00 628.00,407.00 628.00,406.60 648.00,406.60 648.00,408.10 658.00,408.10 658.00,407.50 677.00,407.50 677.00,407.10 756.50,407.10" fill="none" stroke="#4a4af0" stroke-width="1.1"/>
<polyline points="509.50,438.40 756.50,438.40" fill="none" stroke="#4a4af0" stroke-width="1.1"/>
<text x="513.4" y="355.8" font-size="10.4" font-weight="bold" fill="#8e8e8e" fill-opacity="0.8">MR (between)</text>
<polyline points="515.50,410.60 517.40,438.00 520.00,422.40 522.50,433.40 525.00,423.00 527.40,423.60 529.60,438.60 532.50,435.50 534.90,429.40 537.40,422.75 539.60,432.50 542.10,434.40 544.60,432.75 547.10,436.50 549.25,425.25 551.75,428.00 554.40,431.25 556.90,428.60 559.40,420.50 561.50,438.00 564.00,434.00 566.50,420.50 569.00,431.50 571.25,430.00 573.75,432.10 576.25,430.25 578.75,429.00 581.25,430.00 583.60,432.75 585.90,418.40 588.60,426.25 591.25,435.00 593.75,426.25 595.90,418.40 598.40,426.70 601.00,431.25 603.50,426.75 605.40,437.50 607.90,435.00 610.40,438.40 613.25,434.40 615.60,428.60 617.60,414.40 620.40,420.90 622.90,432.50 625.60,429.00 627.50,424.60 630.00,432.50 632.50,437.50 635.40,432.50 637.60,427.40 639.75,435.90 642.50,437.50 644.75,428.00 647.25,433.75 649.75,426.90 652.25,437.10 654.40,424.60 657.25,416.50 659.75,420.90 661.90,422.10 664.50,428.60 666.60,432.75 669.50,435.25 671.40,429.25 674.10,437.50 676.60,420.90 679.40,431.90 681.90,438.40 683.50,420.50 686.50,426.90 689.10,418.40 691.75,418.40 693.50,426.25 696.00,438.40 698.60,433.40 701.40,437.75 703.90,428.00" fill="none" stroke="#3c3cb4" stroke-width="0.7"/>
<circle cx="530.5" cy="430.9" r="2.0" fill="#9c9cd4" fill-opacity="0.55" stroke="#3a3a9c" stroke-width="0.8"/>
<circle cx="625.4" cy="421.5" r="2.0" fill="#9c9cd4" fill-opacity="0.55" stroke="#3a3a9c" stroke-width="0.8"/>
<circle cx="654.5" cy="410.9" r="2.0" fill="#9c9cd4" fill-opacity="0.55" stroke="#3a3a9c" stroke-width="0.8"/>
<circle cx="666.9" cy="438.4" r="2.0" fill="#9c9cd4" fill-opacity="0.55" stroke="#3a3a9c" stroke-width="0.8"/>
<circle cx="686" cy="416.6" r="2.0" fill="#9c9cd4" fill-opacity="0.55" stroke="#3a3a9c" stroke-width="0.8"/>
<circle cx="515.5" cy="410.6" r="2.55" fill="#000080"/>
<circle cx="517.4" cy="438" r="2.55" fill="#000080"/>
<circle cx="520" cy="422.4" r="2.55" fill="#000080"/>
<circle cx="522.5" cy="433.4" r="2.55" fill="#000080"/>
<circle cx="525" cy="423" r="2.55" fill="#000080"/>
<circle cx="527.4" cy="423.6" r="2.55" fill="#000080"/>
<circle cx="529.6" cy="438.6" r="2.55" fill="#000080"/>
<circle cx="532.5" cy="435.5" r="2.55" fill="#000080"/>
<circle cx="534.9" cy="429.4" r="2.55" fill="#000080"/>
<circle cx="537.4" cy="422.75" r="2.55" fill="#000080"/>
<circle cx="539.6" cy="432.5" r="2.55" fill="#000080"/>
<circle cx="542.1" cy="434.4" r="2.55" fill="#000080"/>
<circle cx="544.6" cy="432.75" r="2.55" fill="#000080"/>
<circle cx="547.1" cy="436.5" r="2.55" fill="#000080"/>
<circle cx="549.25" cy="425.25" r="2.55" fill="#000080"/>
<circle cx="551.75" cy="428" r="2.55" fill="#000080"/>
<circle cx="554.4" cy="431.25" r="2.55" fill="#000080"/>
<circle cx="556.9" cy="428.6" r="2.55" fill="#000080"/>
<circle cx="559.4" cy="420.5" r="2.55" fill="#000080"/>
<circle cx="561.5" cy="438" r="2.55" fill="#000080"/>
<circle cx="564" cy="434" r="2.55" fill="#000080"/>
<circle cx="566.5" cy="420.5" r="2.55" fill="#000080"/>
<circle cx="569" cy="431.5" r="2.55" fill="#000080"/>
<circle cx="571.25" cy="430" r="2.55" fill="#000080"/>
<circle cx="573.75" cy="432.1" r="2.55" fill="#000080"/>
<circle cx="576.25" cy="430.25" r="2.55" fill="#000080"/>
<circle cx="578.75" cy="429" r="2.55" fill="#000080"/>
<circle cx="581.25" cy="430" r="2.55" fill="#000080"/>
<circle cx="583.6" cy="432.75" r="2.55" fill="#000080"/>
<circle cx="585.9" cy="418.4" r="2.55" fill="#000080"/>
<circle cx="588.6" cy="426.25" r="2.55" fill="#000080"/>
<circle cx="591.25" cy="435" r="2.55" fill="#000080"/>
<circle cx="593.75" cy="426.25" r="2.55" fill="#000080"/>
<circle cx="595.9" cy="418.4" r="2.55" fill="#000080"/>
<circle cx="598.4" cy="426.7" r="2.55" fill="#000080"/>
<circle cx="601" cy="431.25" r="2.55" fill="#000080"/>
<circle cx="603.5" cy="426.75" r="2.55" fill="#000080"/>
<circle cx="605.4" cy="437.5" r="2.55" fill="#000080"/>
<circle cx="607.9" cy="435" r="2.55" fill="#000080"/>
<circle cx="610.4" cy="438.4" r="2.55" fill="#000080"/>
<circle cx="613.25" cy="434.4" r="2.55" fill="#000080"/>
<circle cx="615.6" cy="428.6" r="2.55" fill="#000080"/>
<circle cx="617.6" cy="414.4" r="2.55" fill="#000080"/>
<circle cx="620.4" cy="420.9" r="2.55" fill="#000080"/>
<circle cx="622.9" cy="432.5" r="2.55" fill="#000080"/>
<circle cx="625.6" cy="429" r="2.55" fill="#000080"/>
<circle cx="627.5" cy="424.6" r="2.55" fill="#000080"/>
<circle cx="630" cy="432.5" r="2.55" fill="#000080"/>
<circle cx="632.5" cy="437.5" r="2.55" fill="#000080"/>
<circle cx="635.4" cy="432.5" r="2.55" fill="#000080"/>
<circle cx="637.6" cy="427.4" r="2.55" fill="#000080"/>
<circle cx="639.75" cy="435.9" r="2.55" fill="#000080"/>
<circle cx="642.5" cy="437.5" r="2.55" fill="#000080"/>
<circle cx="644.75" cy="428" r="2.55" fill="#000080"/>
<circle cx="647.25" cy="433.75" r="2.55" fill="#000080"/>
<circle cx="649.75" cy="426.9" r="2.55" fill="#000080"/>
<circle cx="652.25" cy="437.1" r="2.55" fill="#000080"/>
<circle cx="654.4" cy="424.6" r="2.55" fill="#000080"/>
<circle cx="657.25" cy="416.5" r="2.55" fill="#000080"/>
<circle cx="659.75" cy="420.9" r="2.55" fill="#000080"/>
<circle cx="661.9" cy="422.1" r="2.55" fill="#000080"/>
<circle cx="664.5" cy="428.6" r="2.55" fill="#000080"/>
<circle cx="666.6" cy="432.75" r="2.55" fill="#000080"/>
<circle cx="669.5" cy="435.25" r="2.55" fill="#000080"/>
<circle cx="671.4" cy="429.25" r="2.55" fill="#000080"/>
<circle cx="674.1" cy="437.5" r="2.55" fill="#000080"/>
<circle cx="676.6" cy="420.9" r="2.55" fill="#000080"/>
<circle cx="679.4" cy="431.9" r="2.55" fill="#000080"/>
<circle cx="681.9" cy="438.4" r="2.55" fill="#000080"/>
<circle cx="683.5" cy="420.5" r="2.55" fill="#000080"/>
<circle cx="686.5" cy="426.9" r="2.55" fill="#000080"/>
<circle cx="689.1" cy="418.4" r="2.55" fill="#000080"/>
<circle cx="691.75" cy="418.4" r="2.55" fill="#000080"/>
<circle cx="693.5" cy="426.25" r="2.55" fill="#000080"/>
<circle cx="696" cy="438.4" r="2.55" fill="#000080"/>
<circle cx="698.6" cy="433.4" r="2.55" fill="#000080"/>
<circle cx="701.4" cy="437.75" r="2.55" fill="#000080"/>
<circle cx="703.9" cy="428" r="2.55" fill="#000080"/>
<circle cx="685.1" cy="406.5" r="2.4" fill="#3c3c9c" stroke="#5a5ab0" stroke-width="0.6"/>
<text x="752.8" y="403.40" font-size="6.75" text-anchor="end" fill="#3434e6" font-weight="bold">UCL=1.98057</text>
<text x="752.8" y="425.25" font-size="6.75" text-anchor="end" fill="#7e7e7e">CL=0.60632</text>
<text x="752.8" y="435.00" font-size="6.75" text-anchor="end" fill="#3434e6" font-weight="bold">LCL=0.00000</text>
<path d="M508.50 123.90 L512.80 119.50 L517.10 123.90 L512.80 128.30 Z" fill="#00e6e6" stroke="#4a4a30" stroke-width="0.6"/>
<text x="512.80" y="125.60" font-size="4.4" font-weight="bold" text-anchor="middle" fill="#101010" fill-opacity="0.75">E</text>
<path d="M526.60 129.50 L530.90 125.10 L535.20 129.50 L530.90 133.90 Z" fill="#ff1010" stroke="#4a4a30" stroke-width="0.6"/>
<text x="530.90" y="131.20" font-size="4.4" font-weight="bold" text-anchor="middle" fill="#101010" fill-opacity="0.75">X</text>
<path d="M519.70 140.50 L524.00 136.10 L528.30 140.50 L524.00 144.90 Z" fill="#ffff00" stroke="#4a4a30" stroke-width="0.6"/>
<text x="524.00" y="142.20" font-size="4.4" font-weight="bold" text-anchor="middle" fill="#101010" fill-opacity="0.75">N</text>
<path d="M517.60 151.10 L521.90 146.70 L526.20 151.10 L521.90 155.50 Z" fill="#ffff00" stroke="#4a4a30" stroke-width="0.6"/>
<text x="521.90" y="152.80" font-size="4.4" font-weight="bold" text-anchor="middle" fill="#101010" fill-opacity="0.75">N</text>
<path d="M524.70 150.50 L529.00 146.10 L533.30 150.50 L529.00 154.90 Z" fill="#ff10e0" stroke="#4a4a30" stroke-width="0.6"/>
<text x="529.00" y="152.20" font-size="4.4" font-weight="bold" text-anchor="middle" fill="#101010" fill-opacity="0.75">H</text>
<path d="M532.80 148.30 L537.10 143.90 L541.40 148.30 L537.10 152.70 Z" fill="#ff10e0" stroke="#4a4a30" stroke-width="0.6"/>
<text x="537.10" y="150.00" font-size="4.4" font-weight="bold" text-anchor="middle" fill="#101010" fill-opacity="0.75">H</text>
<path d="M530.30 158.30 L534.60 153.90 L538.90 158.30 L534.60 162.70 Z" fill="#ffff00" stroke="#4a4a30" stroke-width="0.6"/>
<text x="534.60" y="160.00" font-size="4.4" font-weight="bold" text-anchor="middle" fill="#101010" fill-opacity="0.75">N</text>
<path d="M554.70 137.40 L559.00 133.00 L563.30 137.40 L559.00 141.80 Z" fill="#00e6e6" stroke="#4a4a30" stroke-width="0.6"/>
<text x="559.00" y="139.10" font-size="4.4" font-weight="bold" text-anchor="middle" fill="#101010" fill-opacity="0.75">E</text>
<path d="M566.30 138.90 L570.60 134.50 L574.90 138.90 L570.60 143.30 Z" fill="#00e6e6" stroke="#4a4a30" stroke-width="0.6"/>
<text x="570.60" y="140.60" font-size="4.4" font-weight="bold" text-anchor="middle" fill="#101010" fill-opacity="0.75">E</text>
<path d="M559.45 157.00 L563.75 152.60 L568.05 157.00 L563.75 161.40 Z" fill="#ff10e0" stroke="#4a4a30" stroke-width="0.6"/>
<text x="563.75" y="158.70" font-size="4.4" font-weight="bold" text-anchor="middle" fill="#101010" fill-opacity="0.75">H</text>
<path d="M569.10 151.10 L573.40 146.70 L577.70 151.10 L573.40 155.50 Z" fill="#ff10e0" stroke="#4a4a30" stroke-width="0.6"/>
<text x="573.40" y="152.80" font-size="4.4" font-weight="bold" text-anchor="middle" fill="#101010" fill-opacity="0.75">H</text>
<path d="M598.95 129.50 L603.25 125.10 L607.55 129.50 L603.25 133.90 Z" fill="#00e6e6" stroke="#4a4a30" stroke-width="0.6"/>
<text x="603.25" y="131.20" font-size="4.4" font-weight="bold" text-anchor="middle" fill="#101010" fill-opacity="0.75">E</text>
<path d="M619.80 129.00 L624.10 124.60 L628.40 129.00 L624.10 133.40 Z" fill="#ff1010" stroke="#4a4a30" stroke-width="0.6"/>
<text x="624.10" y="130.70" font-size="4.4" font-weight="bold" text-anchor="middle" fill="#101010" fill-opacity="0.75">X</text>
<path d="M611.30 142.00 L615.60 137.60 L619.90 142.00 L615.60 146.40 Z" fill="#00e6e6" stroke="#4a4a30" stroke-width="0.6"/>
<text x="615.60" y="143.70" font-size="4.4" font-weight="bold" text-anchor="middle" fill="#101010" fill-opacity="0.75">E</text>
<path d="M622.95 146.75 L627.25 142.35 L631.55 146.75 L627.25 151.15 Z" fill="#ffff00" stroke="#4a4a30" stroke-width="0.6"/>
<text x="627.25" y="148.45" font-size="4.4" font-weight="bold" text-anchor="middle" fill="#101010" fill-opacity="0.75">N</text>
<path d="M633.30 146.10 L637.60 141.70 L641.90 146.10 L637.60 150.50 Z" fill="#ffff00" stroke="#4a4a30" stroke-width="0.6"/>
<text x="637.60" y="147.80" font-size="4.4" font-weight="bold" text-anchor="middle" fill="#101010" fill-opacity="0.75">N</text>
<path d="M622.95 157.00 L627.25 152.60 L631.55 157.00 L627.25 161.40 Z" fill="#ff10e0" stroke="#4a4a30" stroke-width="0.6"/>
<text x="627.25" y="158.70" font-size="4.4" font-weight="bold" text-anchor="middle" fill="#101010" fill-opacity="0.75">H</text>
<path d="M648.95 125.75 L653.25 121.35 L657.55 125.75 L653.25 130.15 Z" fill="#ff1010" stroke="#4a4a30" stroke-width="0.6"/>
<text x="653.25" y="127.45" font-size="4.4" font-weight="bold" text-anchor="middle" fill="#101010" fill-opacity="0.75">X</text>
<path d="M661.30 132.75 L665.60 128.35 L669.90 132.75 L665.60 137.15 Z" fill="#ff1010" stroke="#4a4a30" stroke-width="0.6"/>
<text x="665.60" y="134.45" font-size="4.4" font-weight="bold" text-anchor="middle" fill="#101010" fill-opacity="0.75">X</text>
<path d="M679.80 124.90 L684.10 120.50 L688.40 124.90 L684.10 129.30 Z" fill="#ff1010" stroke="#4a4a30" stroke-width="0.6"/>
<text x="684.10" y="126.60" font-size="4.4" font-weight="bold" text-anchor="middle" fill="#101010" fill-opacity="0.75">X</text>
<path d="M684.45 126.10 L688.75 121.70 L693.05 126.10 L688.75 130.50 Z" fill="#00e6e6" stroke="#4a4a30" stroke-width="0.6"/>
<text x="688.75" y="127.80" font-size="4.4" font-weight="bold" text-anchor="middle" fill="#101010" fill-opacity="0.75">E</text>
<path d="M684.20 141.40 L688.50 137.00 L692.80 141.40 L688.50 145.80 Z" fill="#ffff00" stroke="#4a4a30" stroke-width="0.6"/>
<text x="688.50" y="143.10" font-size="4.4" font-weight="bold" text-anchor="middle" fill="#101010" fill-opacity="0.75">N</text>
<path d="M695.45 135.00 L699.75 130.60 L704.05 135.00 L699.75 139.40 Z" fill="#ff1010" stroke="#4a4a30" stroke-width="0.6"/>
<text x="699.75" y="136.70" font-size="4.4" font-weight="bold" text-anchor="middle" fill="#101010" fill-opacity="0.75">X</text>
<line x1="509.90" y1="455.2" x2="509.90" y2="458.4" stroke="#222" stroke-width="1"/>
<text transform="translate(509.70,467.9) scale(0.9,1)" font-size="7.0" text-anchor="middle" fill="#000" stroke="#000" stroke-width="0.15">0</text>
<line x1="534.37" y1="455.2" x2="534.37" y2="458.4" stroke="#222" stroke-width="1"/>
<text transform="translate(534.17,467.9) scale(0.9,1)" font-size="7.0" text-anchor="middle" fill="#000" stroke="#000" stroke-width="0.15">10</text>
<line x1="558.84" y1="455.2" x2="558.84" y2="458.4" stroke="#222" stroke-width="1"/>
<text transform="translate(558.64,467.9) scale(0.9,1)" font-size="7.0" text-anchor="middle" fill="#000" stroke="#000" stroke-width="0.15">20</text>
<line x1="583.31" y1="455.2" x2="583.31" y2="458.4" stroke="#222" stroke-width="1"/>
<text transform="translate(583.11,467.9) scale(0.9,1)" font-size="7.0" text-anchor="middle" fill="#000" stroke="#000" stroke-width="0.15">30</text>
<line x1="607.78" y1="455.2" x2="607.78" y2="458.4" stroke="#222" stroke-width="1"/>
<text transform="translate(607.58,467.9) scale(0.9,1)" font-size="7.0" text-anchor="middle" fill="#000" stroke="#000" stroke-width="0.15">40</text>
<line x1="632.25" y1="455.2" x2="632.25" y2="458.4" stroke="#222" stroke-width="1"/>
<text transform="translate(632.05,467.9) scale(0.9,1)" font-size="7.0" text-anchor="middle" fill="#000" stroke="#000" stroke-width="0.15">50</text>
<line x1="656.72" y1="455.2" x2="656.72" y2="458.4" stroke="#222" stroke-width="1"/>
<text transform="translate(656.52,467.9) scale(0.9,1)" font-size="7.0" text-anchor="middle" fill="#000" stroke="#000" stroke-width="0.15">60</text>
<line x1="681.19" y1="455.2" x2="681.19" y2="458.4" stroke="#222" stroke-width="1"/>
<text transform="translate(680.99,467.9) scale(0.9,1)" font-size="7.0" text-anchor="middle" fill="#000" stroke="#000" stroke-width="0.15">70</text>
<line x1="705.66" y1="455.2" x2="705.66" y2="458.4" stroke="#222" stroke-width="1"/>
<text transform="translate(705.46,467.9) scale(0.9,1)" font-size="7.0" text-anchor="middle" fill="#000" stroke="#000" stroke-width="0.15">80</text>
<line x1="730.13" y1="455.2" x2="730.13" y2="458.4" stroke="#222" stroke-width="1"/>
<text transform="translate(729.93,467.9) scale(0.9,1)" font-size="7.0" text-anchor="middle" fill="#000" stroke="#000" stroke-width="0.15">90</text>
<line x1="754.60" y1="455.2" x2="754.60" y2="458.4" stroke="#222" stroke-width="1"/>
<text transform="translate(754.40,467.9) scale(0.9,1)" font-size="7.0" text-anchor="middle" fill="#000" stroke="#000" stroke-width="0.15">100</text>
</svg>
<svg width="768" height="513" viewBox="0 0 768 513"><circle cx="178.3" cy="90.4" r="3.9" fill="#fff" stroke="#333" stroke-width="0.9"/><circle cx="178.3" cy="90.4" r="2.05" fill="#222"/><circle cx="178.3" cy="104.4" r="3.9" fill="#fff" stroke="#333" stroke-width="0.9"/><rect x="276.8" y="180.6" width="8.6" height="8.8" fill="#f0f0f0" stroke="#4a4a4a" stroke-width="0.9"/><path d="M386.9 183.4 l2.8 2.8 l2.8 -2.8" fill="none" stroke="#555" stroke-width="0.9"/><rect x="276.8" y="194.6" width="8.6" height="8.8" fill="#f0f0f0" stroke="#4a4a4a" stroke-width="0.9"/><path d="M386.9 197.4 l2.8 2.8 l2.8 -2.8" fill="none" stroke="#555" stroke-width="0.9"/><rect x="276.8" y="208.6" width="8.6" height="8.8" fill="#f0f0f0" stroke="#4a4a4a" stroke-width="0.9"/><path d="M386.9 211.4 l2.8 2.8 l2.8 -2.8" fill="none" stroke="#555" stroke-width="0.9"/><rect x="174.80" y="265.10" width="7.6" height="7.6" fill="#fff" stroke="#3a3a3a" stroke-width="0.9"/><path d="M176.10 269.00 l1.8 1.9 l3.3 -3.9" fill="none" stroke="#222" stroke-width="1.0"/><rect x="174.80" y="279.30" width="7.6" height="7.6" fill="#fff" stroke="#3a3a3a" stroke-width="0.9"/><path d="M176.10 283.20 l1.8 1.9 l3.3 -3.9" fill="none" stroke="#222" stroke-width="1.0"/><rect x="174.80" y="293.50" width="7.6" height="7.6" fill="#fff" stroke="#3a3a3a" stroke-width="0.9"/><path d="M176.10 297.40 l1.8 1.9 l3.3 -3.9" fill="none" stroke="#222" stroke-width="1.0"/><rect x="174.80" y="307.70" width="7.6" height="7.6" fill="#fff" stroke="#3a3a3a" stroke-width="0.9"/><rect x="174.80" y="321.90" width="7.6" height="7.6" fill="#fff" stroke="#3a3a3a" stroke-width="0.9"/><path d="M176.10 325.80 l1.8 1.9 l3.3 -3.9" fill="none" stroke="#222" stroke-width="1.0"/><rect x="317.00" y="265.10" width="7.6" height="7.6" fill="#fff" stroke="#3a3a3a" stroke-width="0.9"/><rect x="317.00" y="279.30" width="7.6" height="7.6" fill="#fff" stroke="#3a3a3a" stroke-width="0.9"/><path d="M318.30 283.20 l1.8 1.9 l3.3 -3.9" fill="none" stroke="#222" stroke-width="1.0"/><rect x="317.00" y="293.50" width="7.6" height="7.6" fill="#fff" stroke="#3a3a3a" stroke-width="0.9"/><rect x="317.00" y="307.70" width="7.6" height="7.6" fill="#fff" stroke="#3a3a3a" stroke-width="0.9"/><path d="M318.30 311.60 l1.8 1.9 l3.3 -3.9" fill="none" stroke="#222" stroke-width="1.0"/><rect x="317.00" y="321.90" width="7.6" height="7.6" fill="#fff" stroke="#3a3a3a" stroke-width="0.9"/><path d="M318.30 325.80 l1.8 1.9 l3.3 -3.9" fill="none" stroke="#222" stroke-width="1.0"/><rect x="195.80" y="351.70" width="7.6" height="7.6" fill="#fff" stroke="#3a3a3a" stroke-width="0.9"/><path d="M197.10 355.60 l1.8 1.9 l3.3 -3.9" fill="none" stroke="#222" stroke-width="1.0"/><rect x="195.80" y="365.95" width="7.6" height="7.6" fill="#fff" stroke="#3a3a3a" stroke-width="0.9"/><path d="M197.10 369.85 l1.8 1.9 l3.3 -3.9" fill="none" stroke="#222" stroke-width="1.0"/><rect x="195.80" y="380.20" width="7.6" height="7.6" fill="#fff" stroke="#3a3a3a" stroke-width="0.9"/><path d="M197.10 384.10 l1.8 1.9 l3.3 -3.9" fill="none" stroke="#222" stroke-width="1.0"/><rect x="195.80" y="394.45" width="7.6" height="7.6" fill="#fff" stroke="#3a3a3a" stroke-width="0.9"/><path d="M197.10 398.35 l1.8 1.9 l3.3 -3.9" fill="none" stroke="#222" stroke-width="1.0"/></svg>
<svg width="768" height="513" viewBox="0 0 768 513" font-family="Liberation Sans, Arial, sans-serif">
<defs>
<linearGradient id="gl" x1="0" y1="0" x2="0" y2="1"><stop offset="0" stop-color="#fff" stop-opacity="0.75"/><stop offset="0.5" stop-color="#fff" stop-opacity="0.1"/><stop offset="1" stop-color="#000" stop-opacity="0.12"/></linearGradient>
<linearGradient id="pin2" x1="0" y1="0" x2="0.6" y2="1"><stop offset="0" stop-color="#9a9a9a"/><stop offset="1" stop-color="#3c3c3c"/></linearGradient>
<radialGradient id="pin" cx="0.5" cy="0.6" r="0.6"><stop offset="0" stop-color="#1c1c1c"/><stop offset="0.6" stop-color="#3a3a3a"/><stop offset="1" stop-color="#6a6a6a"/></radialGradient>
</defs>
<circle cx="11" cy="9.8" r="4.3" fill="#e9efe4"/><circle cx="11" cy="9.8" r="2.6" fill="#58b030"/><circle cx="11" cy="9.8" r="1.1" fill="#b8e070"/>
<path d="M690.2 10 H697.2" stroke="#b8b8cc" stroke-width="0.9"/>
<rect x="719.3" y="6.4" width="6.5" height="6.2" fill="none" stroke="#d8d8e4" stroke-width="0.8"/>
<path d="M749.2 6.3 L755.8 12.9 M755.8 6.3 L749.2 12.9" stroke="#e8e8f0" stroke-width="0.85"/>
<path d="M263 48.2 l3.1 3.1 l3.1 -3.1" fill="none" stroke="#555" stroke-width="1"/>
<path d="M286.8 45.8 h4.4 v4.3 h4.8 v4.4 h-4.8 v4.2 h-4.4 v-4.2 h-4.8 v-4.4 h4.8 z" fill="#35b548" stroke="#7cc888" stroke-width="0.5"/>
<rect x="303.5" y="50.1" width="14" height="4.3" rx="1" fill="#e61e1e" stroke="#f08a9a" stroke-width="0.6"/>
<path d="M324.5 45.1 h5.2 l2.7 2.6 v6 h-7.9 z" fill="#cfcfcf" stroke="#5e5e5e" stroke-width="0.8"/>
<path d="M325.6 47.4 h2.2" stroke="#4a4a4a" stroke-width="0.8"/><path d="M325.4 49.9 h6 M325.4 51.7 h6" stroke="#8c8c8c" stroke-width="0.7"/>
<rect x="328.2" y="46" width="2.1" height="1.9" fill="#fafafa"/>
<path d="M330.4 48.8 h4.6 l3.4 3.2 v5.7 h-8 z" fill="#dedede" stroke="#808080" stroke-width="0.7"/>
<path d="M331.4 53.2 h6 M331.4 54.8 h6 M331.4 56.3 h6" stroke="#8a8a8a" stroke-width="0.7"/>
<rect x="333.9" y="49.7" width="2.2" height="2.1" fill="#fafafa"/>
<path d="M330.4 48.6 V57.7 H336.9" fill="none" stroke="#141414" stroke-width="1.1"/>
<circle cx="145.2" cy="82.7" r="2.9" fill="url(#pin2)"/><circle cx="142.1" cy="84.9" r="4.0" fill="#c2c2c2" stroke="#666" stroke-width="0.6"/><circle cx="143.1" cy="85.1" r="2.7" fill="url(#pin)"/>
<circle cx="116.3" cy="81.2" r="4.3" fill="#f4f4f4" fill-opacity="0.9"/>
<path d="M114.3 78.60000000000001 l2 2 l2 -2 M114.3 81.60000000000001 l2 2 l2 -2" fill="none" stroke="#1a1a1a" stroke-width="1.25"/>
<circle cx="116.3" cy="99.95" r="4.3" fill="#f4f4f4" fill-opacity="0.9"/>
<path d="M114.3 97.35000000000001 l2 2 l2 -2 M114.3 100.35000000000001 l2 2 l2 -2" fill="none" stroke="#1a1a1a" stroke-width="1.25"/>
<circle cx="116.3" cy="118.7" r="4.3" fill="#f4f4f4" fill-opacity="0.9"/>
<path d="M114.3 116.10000000000001 l2 2 l2 -2 M114.3 119.10000000000001 l2 2 l2 -2" fill="none" stroke="#1a1a1a" stroke-width="1.25"/>
<circle cx="116.3" cy="137.45" r="4.3" fill="#f4f4f4" fill-opacity="0.9"/>
<path d="M114.3 134.85 l2 2 l2 -2 M114.3 137.85 l2 2 l2 -2" fill="none" stroke="#1a1a1a" stroke-width="1.25"/>
<circle cx="116.3" cy="156.2" r="4.3" fill="#f4f4f4" fill-opacity="0.9"/>
<path d="M114.3 155.79999999999998 l2 -2 l2 2 M114.3 158.79999999999998 l2 -2 l2 2" fill="none" stroke="#1a1a1a" stroke-width="1.25"/>
<circle cx="116.3" cy="309.7" r="4.3" fill="#f4f4f4" fill-opacity="0.9"/>
<path d="M114.3 307.09999999999997 l2 2 l2 -2 M114.3 310.09999999999997 l2 2 l2 -2" fill="none" stroke="#1a1a1a" stroke-width="1.25"/>
<circle cx="116.3" cy="328.45" r="4.3" fill="#f4f4f4" fill-opacity="0.9"/>
<path d="M114.3 325.84999999999997 l2 2 l2 -2 M114.3 328.84999999999997 l2 2 l2 -2" fill="none" stroke="#1a1a1a" stroke-width="1.25"/>
<circle cx="116.3" cy="347.2" r="4.3" fill="#f4f4f4" fill-opacity="0.9"/>
<path d="M114.3 344.59999999999997 l2 2 l2 -2 M114.3 347.59999999999997 l2 2 l2 -2" fill="none" stroke="#1a1a1a" stroke-width="1.25"/>
<circle cx="116.3" cy="365.95" r="4.3" fill="#f4f4f4" fill-opacity="0.9"/>
<path d="M114.3 363.34999999999997 l2 2 l2 -2 M114.3 366.34999999999997 l2 2 l2 -2" fill="none" stroke="#1a1a1a" stroke-width="1.25"/>
<circle cx="116.3" cy="384.7" r="4.3" fill="#f4f4f4" fill-opacity="0.9"/>
<path d="M114.3 382.09999999999997 l2 2 l2 -2 M114.3 385.09999999999997 l2 2 l2 -2" fill="none" stroke="#1a1a1a" stroke-width="1.25"/>
<circle cx="116.3" cy="403.45" r="4.3" fill="#f4f4f4" fill-opacity="0.9"/>
<path d="M114.3 400.84999999999997 l2 2 l2 -2 M114.3 403.84999999999997 l2 2 l2 -2" fill="none" stroke="#1a1a1a" stroke-width="1.25"/>
<circle cx="116.3" cy="422.2" r="4.3" fill="#f4f4f4" fill-opacity="0.9"/>
<path d="M114.3 419.59999999999997 l2 2 l2 -2 M114.3 422.59999999999997 l2 2 l2 -2" fill="none" stroke="#1a1a1a" stroke-width="1.25"/>
<path d="M174.9 355.8 L181.5 349.2 L188.1 355.8 L181.5 362.40000000000003 Z" fill="#36c4f4" stroke="#36c4f4" stroke-opacity="0.5" stroke-width="0.8" stroke-linejoin="round"/>
<path d="M174.9 355.8 L181.5 349.2 L188.1 355.8 L181.5 362.40000000000003 Z" fill="url(#gl)"/>
<text x="181.5" y="358.5" font-size="7" font-weight="bold" text-anchor="middle" fill="#111">E</text>
<path d="M174.9 370.05 L181.5 363.45 L188.1 370.05 L181.5 376.65000000000003 Z" fill="#f23a3a" stroke="#f23a3a" stroke-opacity="0.5" stroke-width="0.8" stroke-linejoin="round"/>
<path d="M174.9 370.05 L181.5 363.45 L188.1 370.05 L181.5 376.65000000000003 Z" fill="url(#gl)"/>
<text x="181.5" y="372.75" font-size="7" font-weight="bold" text-anchor="middle" fill="#111">X</text>
<path d="M174.9 384.3 L181.5 377.7 L188.1 384.3 L181.5 390.90000000000003 Z" fill="#fbe91e" stroke="#fbe91e" stroke-opacity="0.5" stroke-width="0.8" stroke-linejoin="round"/>
<path d="M174.9 384.3 L181.5 377.7 L188.1 384.3 L181.5 390.90000000000003 Z" fill="url(#gl)"/>
<text x="181.5" y="387.0" font-size="7" font-weight="bold" text-anchor="middle" fill="#111">N</text>
<path d="M174.9 398.55 L181.5 391.95 L188.1 398.55 L181.5 405.15000000000003 Z" fill="#e42aa8" stroke="#e42aa8" stroke-opacity="0.5" stroke-width="0.8" stroke-linejoin="round"/>
<path d="M174.9 398.55 L181.5 391.95 L188.1 398.55 L181.5 405.15000000000003 Z" fill="url(#gl)"/>
<text x="181.5" y="401.25" font-size="7" font-weight="bold" text-anchor="middle" fill="#111">H</text>
</svg>
</body></html>
